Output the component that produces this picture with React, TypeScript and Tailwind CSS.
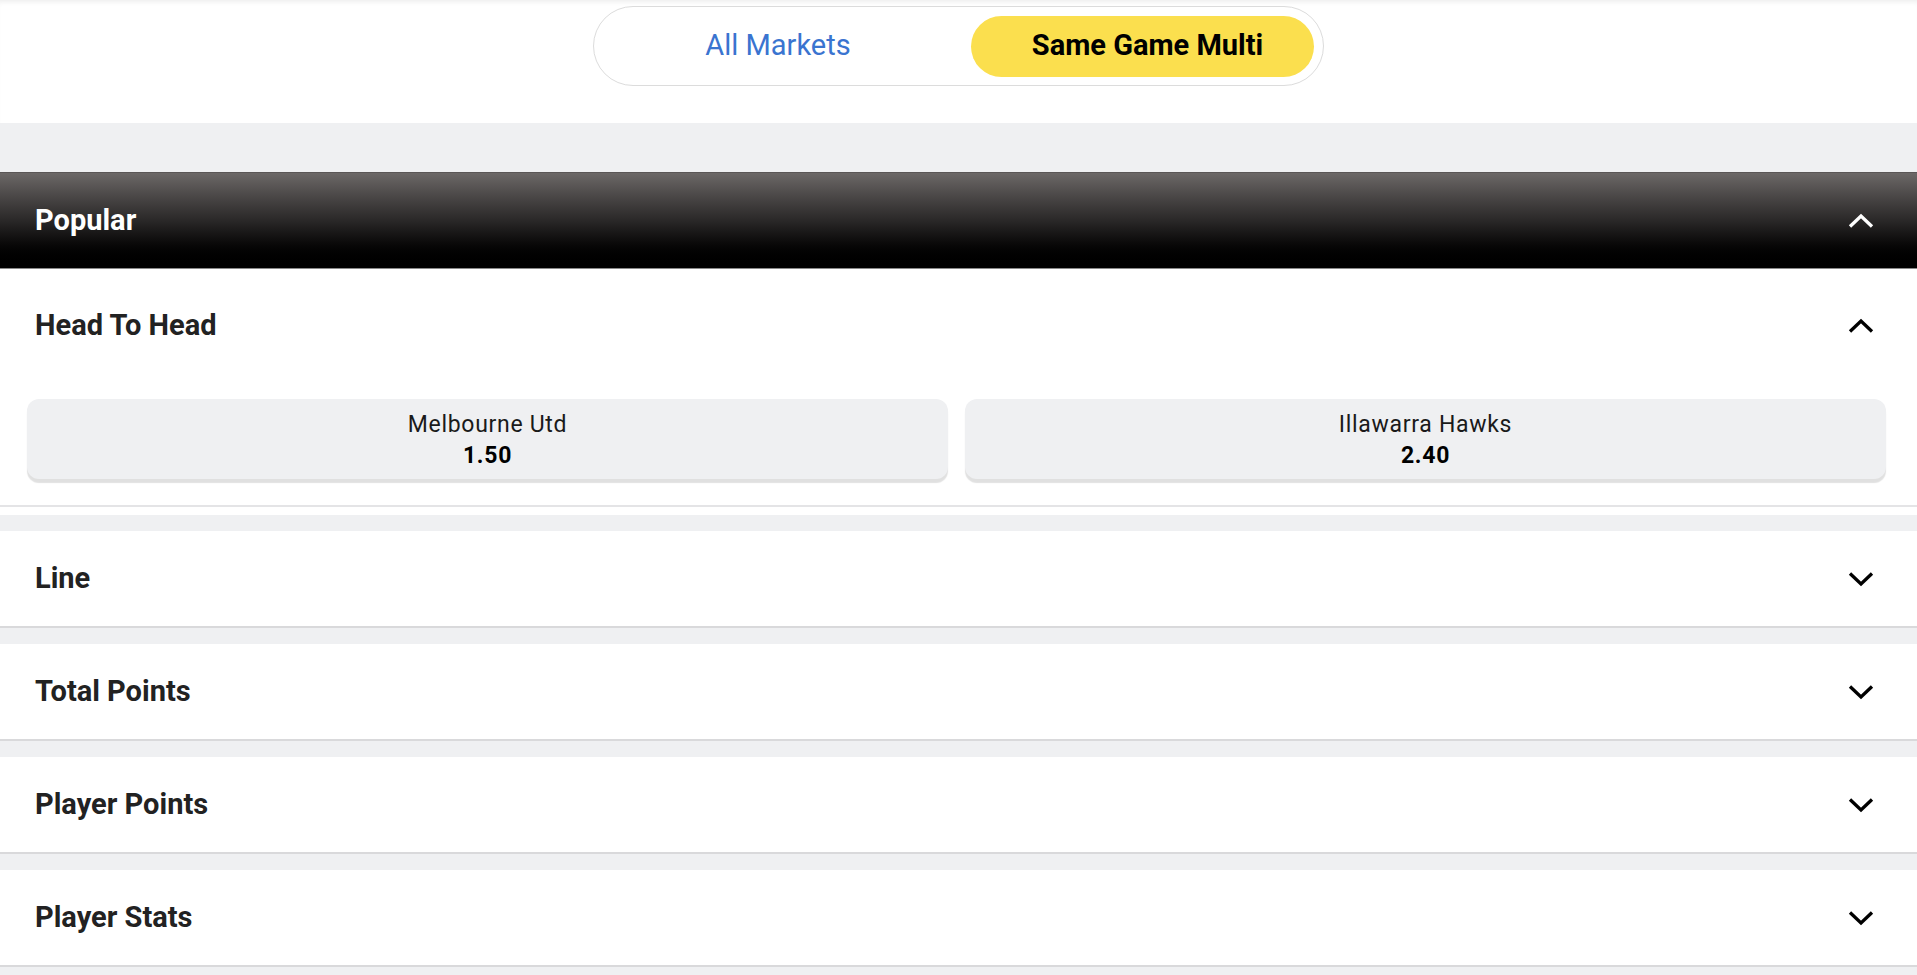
import React from "react";

const collapsedMarkets = ["Line", "Total Points", "Player Points", "Player Stats"];

const odds = [
  { name: "Melbourne Utd", price: "1.50" },
  { name: "Illawarra Hawks", price: "2.40" },
];

function Chevron({ up, className }: { up?: boolean; className?: string }) {
  return (
    <svg
      width="26"
      height="16"
      viewBox="0 0 26 16"
      fill="none"
      stroke="currentColor"
      strokeWidth="3.3"
      strokeLinecap="butt"
      strokeLinejoin="miter"
      className={className}
    >
      <polyline points={up ? "2,13.5 13,3 24,13.5" : "2,2.5 13,13 24,2.5"} />
    </svg>
  );
}

export default function App() {
  return (
    <div className="min-h-[975px] w-full bg-[#eff0f2] font-['Roboto','Liberation_Sans',sans-serif] text-[#222]">
      {/* market type toggle */}
      <div className="flex h-[123px] justify-center bg-white pt-[6px] shadow-[inset_0_5px_5px_-3px_rgba(0,0,0,0.07)]">
        <div className="flex h-[80px] w-[731px] items-center rounded-full border border-[#dcdcdc] bg-white p-[9px]">
          <button
            type="button"
            className="flex h-full flex-1 items-center justify-center pr-[18px] text-[29px] text-[#3a74d0]"
          >
            All Markets
          </button>
          <button
            type="button"
            className="flex h-[61px] w-[343px] items-center justify-center rounded-full bg-[#fbdf4e] pl-[10px] text-[29px] font-bold text-black"
          >
            Same Game Multi
          </button>
        </div>
      </div>

      <div className="h-[49px]" />

      {/* popular group header */}
      <div className="flex h-[97px] items-center justify-between border-t border-[#5a5656] border-b border-b-[#8a8a8a] bg-gradient-to-b from-[#6c6867] via-[#2a2828] to-black pl-[35px] pr-[43px]">
        <span className="text-[29px] font-bold text-white">Popular</span>
        <Chevron up className="text-white" />
      </div>

      {/* head to head */}
      <div className="mb-[16px] border-b-[8px] border-white bg-white">
        <div className="border-b-2 border-[#e4e4e6] pb-[26px]">
          <div className="flex h-[114px] items-center justify-between pl-[35px] pr-[43px]">
            <span className="text-[29px] font-bold">Head To Head</span>
            <Chevron up className="text-black" />
          </div>
          <div className="mt-[16px] grid grid-cols-2 gap-[17px] pl-[27px] pr-[31px]">
            {odds.map((o) => (
              <button
                key={o.name}
                type="button"
                className="flex h-[80px] flex-col items-center justify-center rounded-[12px] bg-[#eff0f2] pt-[2px] text-[23px] leading-[31px] tracking-[0.7px] text-[#1a1a1a] shadow-[0_4px_1px_rgba(0,0,0,0.12)]"
              >
                <span>{o.name}</span>
                <span className="font-bold text-black">{o.price}</span>
              </button>
            ))}
          </div>
        </div>
      </div>

      {collapsedMarkets.map((m) => (
        <div
          key={m}
          className="mb-[16px] flex h-[97px] items-center justify-between border-b-2 border-[#d9d9db] bg-white pl-[35px] pr-[43px]"
        >
          <span className="text-[29px] font-bold">{m}</span>
          <Chevron className="text-black" />
        </div>
      ))}
    </div>
  );
}
